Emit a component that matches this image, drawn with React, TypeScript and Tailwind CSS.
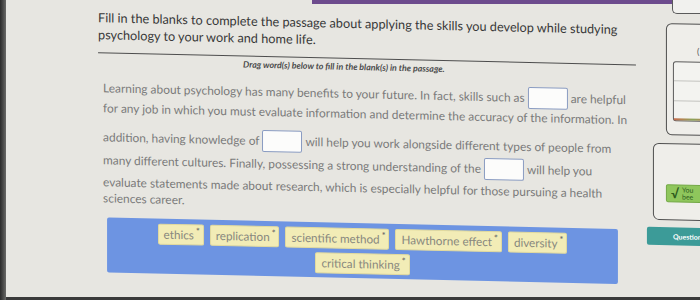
import React from "react";

function Blank() {
  return (
    <span className="mx-[3px] inline-block h-[22px] w-[40px] shrink-0 rounded-[2px] border border-[#8a9cc2] bg-[#fcfcfb]" />
  );
}

function Chip({ label }: { label: string }) {
  return (
    <div className="flex h-[21px] shrink-0 items-center rounded-[2px] border border-[#e2da9e] bg-[#f2ecb6] pl-[5px] pr-[3px]">
      <span className="text-[11.7px] leading-none text-[#88887e]">{label}</span>
      <span className="mb-[8px] ml-[2px] text-[9px] font-bold leading-none text-[#6f6f6a]">*</span>
    </div>
  );
}

export default function App() {
  return (
    <div className="flex h-[300px] w-[700px] overflow-hidden bg-[#e7e6e1] font-[family-name:Lato,sans-serif]">
      <div className="h-full w-[6px] shrink-0 bg-linear-to-r from-[#2a2a2a] to-[#6a6a68]" />
      <div className="flex min-w-0 flex-1 flex-col">
        <div className="flex h-[14px] shrink-0 items-start">
          <div className="w-[306px] shrink-0" />
          <div className="h-[4px] w-[360px] shrink-0 bg-[#6d4b8d]" />
          <div className="h-[14px] flex-1 rounded-bl-[5px] border-b-[1.5px] border-l-[1.5px] border-[#5a5a5a] bg-[#f1f1ee]" />
        </div>
        <div className="flex flex-1 rotate-[1.3deg] skew-x-[1.3deg] items-start">
          <div className="ml-[92px] w-[538px] shrink-0">
            <div className="mt-[1px] whitespace-nowrap text-[12.7px] leading-[17px] text-[#383838]">
              <div>Fill in the blanks to complete the passage about applying the skills you develop while studying</div>
              <div>psychology to your work and home life.</div>
            </div>
            <div className="mt-[8.5px] h-[1.5px] bg-[#4d4d4d]" />
            <div className="mt-[3px] whitespace-nowrap pl-[145px] text-[8.8px] font-bold italic leading-[10px] text-[#4a4a4a]">
              Drag word(s) below to fill in the blank(s) in the passage.
            </div>
            <div className="whitespace-nowrap pl-[5px] text-[11.9px] leading-[16px] text-[#7a7a7a]">
              <div className="mt-[9.5px] flex h-[24px] items-center">
                Learning about psychology has many benefits to your future. In fact, skills such as
                <Blank />
                are helpful
              </div>
              <div className="flex h-[17px] items-center">
                for any job in which you must evaluate information and determine the accuracy of the information. In
              </div>
              <div className="mt-[8.3px] flex h-[24px] items-center">
                addition, having knowledge of
                <Blank />
                will help you work alongside different types of people from
              </div>
              <div className="flex h-[22px] items-center">
                many different cultures. Finally, possessing a strong understanding of the
                <Blank />
                will help you
              </div>
              <div className="flex h-[22px] items-center">
                evaluate statements made about research, which is especially helpful for those pursuing a health
              </div>
              <div className="flex h-[10px] items-center">sciences career.</div>
            </div>
            <div className="ml-[9px] mt-[14.6px] flex h-[55px] w-[511px] flex-col items-center gap-[4px] rounded-[2px] bg-[#6d94e2] pt-[4.6px]">
              <div className="flex gap-x-[6px]">
                <Chip label="ethics" />
                <Chip label="replication" />
                <Chip label="scientific method" />
                <Chip label="Hawthorne effect" />
                <Chip label="diversity" />
              </div>
              <div className="flex">
                <Chip label="critical thinking" />
              </div>
            </div>
          </div>
          <div className="ml-[11px] flex w-[53px] shrink-0 flex-col">
            <div className="ml-[19px] mt-[2px] h-[112px] w-[44px] shrink-0 rounded-[6px] border-[1.5px] border-[#4f4f4f] bg-[#efeeea] pl-[6px] pt-[22px]">
              <div className="pl-[24px] text-[9px] leading-[10px] text-[#555]">(</div>
              <div className="mt-[5px] flex h-[60px] w-[40px] flex-col rounded-[3px] border border-[#5b5b5b] bg-[#f3f3f0]">
                <div className="h-[19px] border-b border-[#c4c4c0]" />
                <div className="h-[20px] border-b border-[#c4c4c0]" />
                <div className="flex-1" />
                <div className="h-[2px] bg-linear-to-r from-[#c8694c] via-[#8aa35a] to-[#c8694c]" />
              </div>
            </div>
            <div className="ml-[6px] mt-[8px] h-[77px] w-[60px] shrink-0 rounded-[6px] border-[1.5px] border-[#4f4f4f] bg-[#efeeea] pl-[12px] pt-[40px]">
              <div className="flex h-[18px] w-[44px] items-center gap-[3px] rounded-[2px] border border-[#73a846] bg-[#8fc65c] pl-[4px]">
                <span className="text-[13px] font-bold leading-none text-[#2e5c1e]">√</span>
                <span className="text-[7px] leading-[7px] text-[#2e5c1e]">
                  You
                  <br />
                  bee
                </span>
              </div>
            </div>
            <div className="mt-[7px] h-[18px] w-[60px] shrink-0 rounded-[2px] bg-[#3c9b98] pl-[26px] text-[7px] font-bold leading-[18px] text-white">
              Question
            </div>
          </div>
        </div>
        <div className="h-[3px] shrink-0 bg-[#3a3a3a]" />
      </div>
    </div>
  );
}
